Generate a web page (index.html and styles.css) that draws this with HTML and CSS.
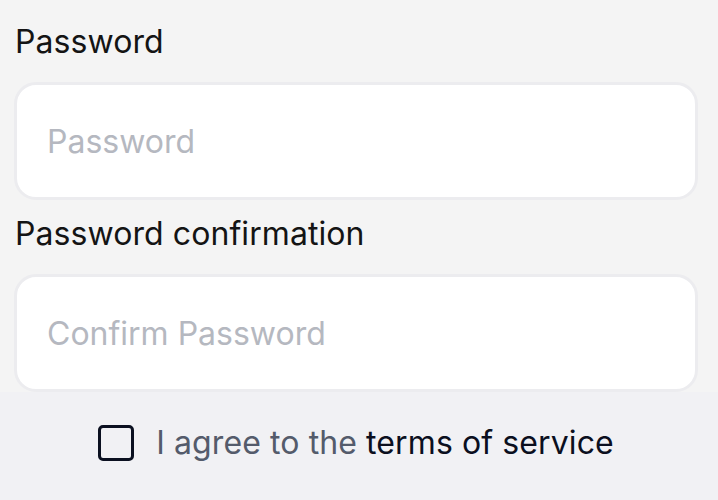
FILE: index.html
```html
<!DOCTYPE html>
<html lang="en">
<head>
<meta charset="utf-8">
<title>Register</title>
<link rel="stylesheet" href="styles.css">
</head>
<body>
<form class="form">
  <div class="fields">
    <label class="label" for="pw">Password</label>
    <input class="input" id="pw" type="password" placeholder="Password">
    <label class="label label-2" for="pwc">Password confirmation</label>
    <input class="input" id="pwc" type="password" placeholder="Confirm Password">
  </div>
  <div class="agree">
    <span class="checkbox"></span>
    <span class="agree-text">I agree to the <a class="terms">terms of service</a></span>
  </div>
</form>
</body>
</html>
```
FILE: styles.css
```css
html, body {
  margin: 0;
  padding: 0;
  background: #f1f1f4;
}
body {
  font-family: Inter, "Noto Sans", sans-serif;
  width: 718px;
  height: 500px;
  overflow: hidden;
}
.form {
  margin: 0;
}
.fields {
  background: #f4f4f4;
  padding: 22px 20px 0 14px;
  display: flex;
  flex-direction: column;
}
.label {
  font-size: 32px;
  line-height: 40px;
  font-weight: 400;
  color: #141414;
  padding-left: 1px;
  margin-bottom: 20px;
  letter-spacing: 0.08px;
}
.label-2 {
  margin-top: 14px;
}
.input {
  box-sizing: border-box;
  height: 118px;
  width: 100%;
  border: 3px solid #ececef;
  border-radius: 22px;
  background: #fff;
  padding: 0 0 0 30px;
  font-family: inherit;
  font-size: 32px;
  color: #1f1f1f;
  outline: none;
}
.input::placeholder {
  color: #b5b8c0;
}
.agree {
  display: flex;
  align-items: center;
  justify-content: center;
  gap: 22px;
  padding: 31px 20px 0 14px;
}
.checkbox {
  box-sizing: border-box;
  width: 36px;
  height: 36px;
  border: 3.5px solid #0b1020;
  border-radius: 5px;
  flex: none;
}
.agree-text {
  font-size: 32px;
  line-height: 40px;
  color: #545b6b;
  letter-spacing: 0.1px;
}
.terms {
  color: #0b0f1e;
  text-decoration: none;
}
```
